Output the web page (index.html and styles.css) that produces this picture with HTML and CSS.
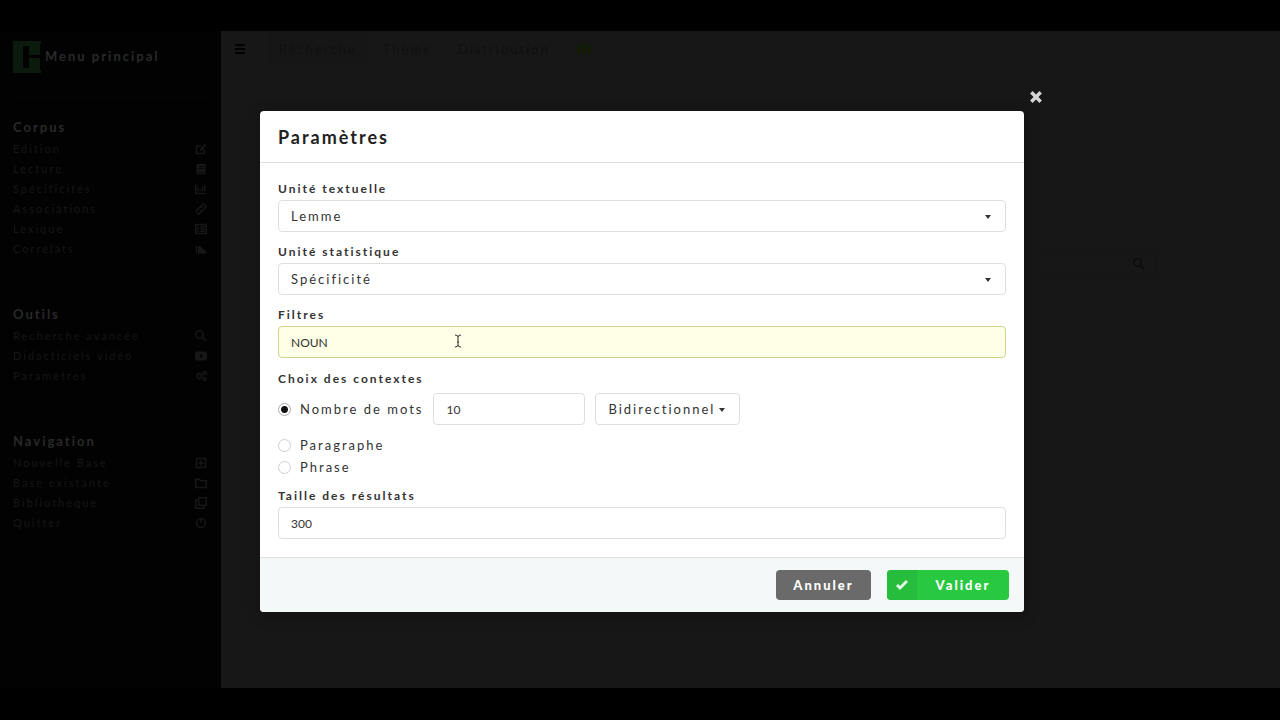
FILE: index.html
```html
<!DOCTYPE html>
<html lang="fr">
<head>
    <meta charset="UTF-8">
    <title>Paramètres</title>
    <link rel="stylesheet" href="styles.css">
</head>
<body>
    <div class="app">
        <nav class="sidebar">
            <div class="brand">
                <svg class="logo" viewBox="0 0 28 32">
                    <path fill="#0c190d" d="M0 0h28v3h-1v11H16V5h-6v22h6V17h11v12h1v3H0z"/>
                </svg>
                <span>Menu principal</span>
            </div>

            <div class="menu">
                <h2>Corpus</h2>
                <a href="#">Edition
                    <svg class="icon" viewBox="0 0 16 16"><path class="line" d="M12 9v5H2V4h6"/><path d="M6 11l1-3 6-7 2 2-6 7z"/></svg>
                </a>
                <a href="#">Lecture
                    <svg class="icon" viewBox="0 0 16 16"><path d="M4 1h10v14H4a2 2 0 0 1-2-2V3a2 2 0 0 1 2-2zm1 3v1h7V4zm0 3v1h7V7zm-1 5v1h8v-1z"/></svg>
                </a>
                <a href="#">Spécificités
                    <svg class="icon" viewBox="0 0 16 16"><path class="line" d="M1 2v12h14M4 11V7m3 4V9m3 2V5m3 6V3"/></svg>
                </a>
                <a href="#">Associations
                    <svg class="icon" viewBox="0 0 16 16"><path class="line" d="M7 5l3-3a3 3 0 0 1 4 4l-4 4a3 3 0 0 1-4 0M9 11l-3 3a3 3 0 0 1-4-4l4-4a3 3 0 0 1 4 0"/></svg>
                </a>
                <a href="#">Lexique
                    <svg class="icon" viewBox="0 0 16 16"><path class="line" d="M1 2h14v12H1zM3 5h2m2 0h6M3 8h2m2 0h6M3 11h2m2 0h6"/></svg>
                </a>
                <a href="#">Corrélats
                    <svg class="icon" viewBox="0 0 16 16"><path d="M1 3h2v11H1zm3 1h3l3 3v2l2-1 3 4v2H4z"/></svg>
                </a>
            </div>

            <div class="menu">
                <h2>Outils</h2>
                <a href="#">Recherche avancée
                    <svg class="icon" viewBox="0 0 16 16"><circle class="line" cx="6" cy="6" r="5"/><path class="line" d="M10 10l5 5"/></svg>
                </a>
                <a href="#">Didacticiels vidéo
                    <svg class="icon" viewBox="0 0 16 16"><path d="M2 2h12l2 2v8l-2 2H2l-2-2V4zm5 3v6l4-3z"/></svg>
                </a>
                <a href="#">Paramètres
                    <svg class="icon" viewBox="0 0 16 16"><circle class="line" cx="6" cy="8" r="3"/><path class="line" d="M6 3v2m0 6v2M1 8h2m6 0h2M3 5l1 1m4 4l1 1M9 5L8 6m-4 4l-1 1"/><circle class="line" cx="13" cy="4" r="2"/><circle class="line" cx="13" cy="12" r="2"/></svg>
                </a>
            </div>

            <div class="menu">
                <h2>Navigation</h2>
                <a href="#">Nouvelle Base
                    <svg class="icon" viewBox="0 0 16 16"><path class="line" d="M2 2h12v12H2zM8 4v8M4 8h8"/></svg>
                </a>
                <a href="#">Base existante
                    <svg class="icon" viewBox="0 0 16 16"><path class="line" d="M1 3h5l2 2h7v9H1z"/></svg>
                </a>
                <a href="#">Bibliothèque
                    <svg class="icon" viewBox="0 0 16 16"><path class="line" d="M5 1h10v10H5zM5 4H1v11h11v-4"/></svg>
                </a>
                <a href="#">Quitter
                    <svg class="icon" viewBox="0 0 16 16"><circle class="line" cx="8" cy="8" r="6"/><path class="line" d="M8 3v5"/></svg>
                </a>
            </div>
        </nav>

        <main class="page">
            <div class="tabs">
                <button class="toggle" aria-label="Menu">
                    <svg viewBox="0 0 12 12"><path d="M1 1h10v2H1zm0 4h10v2H1zm0 4h10v2H1z"/></svg>
                </button>
                <a class="tab active" href="#">Recherche</a>
                <a class="tab" href="#">Thème</a>
                <a class="tab" href="#">Distribution</a>
                <svg class="map" viewBox="0 0 14 12"><path d="M0 2l4-2v10l-4 2zM5 0l4 2v10l-4-2zM10 2l4-2v10l-4 2z"/></svg>
            </div>
            <div class="search">
                <svg viewBox="0 0 16 16"><circle cx="6" cy="6" r="5"/><path d="M10 10l5 5"/></svg>
            </div>
        </main>
    </div>

    <div class="overlay">
        <form class="modal">
            <button type="button" class="close" aria-label="Fermer">
                <svg viewBox="0 0 12 12"><path d="M2 2l8 8M10 2l-8 8"/></svg>
            </button>

            <h1>Paramètres</h1>

            <div class="content">
                <div class="field">
                    <label for="unit">Unité textuelle</label>
                    <div class="dropdown">
                        <select id="unit"><option>Lemme</option></select>
                    </div>
                </div>

                <div class="field">
                    <label for="stat">Unité statistique</label>
                    <div class="dropdown">
                        <select id="stat"><option>Spécificité</option></select>
                    </div>
                </div>

                <div class="field">
                    <label for="filters">Filtres</label>
                    <div class="filled">
                        <input id="filters" type="text" value="NOUN">
                        <svg class="cursor" viewBox="0 0 8 14"><path d="M1 1q3 0 3 2q0-2 3-2M4 3v8M1 13q3 0 3-2q0 2 3 2M3 8h2"/></svg>
                    </div>
                </div>

                <fieldset>
                    <legend>Choix des contextes</legend>
                    <div class="words">
                        <label class="radio"><input type="radio" name="context" checked>Nombre de mots</label>
                        <input class="count" type="text" value="10" aria-label="Nombre de mots">
                        <div class="dropdown small">
                            <select aria-label="Direction"><option>Bidirectionnel</option></select>
                        </div>
                    </div>
                    <label class="radio"><input type="radio" name="context">Paragraphe</label>
                    <label class="radio"><input type="radio" name="context">Phrase</label>
                </fieldset>

                <div class="field">
                    <label for="size">Taille des résultats</label>
                    <input id="size" type="text" value="300">
                </div>
            </div>

            <div class="actions">
                <button type="button" class="cancel">Annuler</button>
                <button type="button" class="submit">
                    <span class="check"><svg viewBox="0 0 12 12"><path d="M1 6l3 3 7-7"/></svg></span>
                    <span class="text">Valider</span>
                </button>
            </div>
        </form>
    </div>
</body>
</html>
```
FILE: styles.css
```css
* {
    box-sizing: border-box;
}

body {
    margin: 0;
    min-height: 100vh;
    padding: 31px 0 32px;
    display: flex;
    background: #000;
    color: #333;
    font-family: Lato, sans-serif;
    font-size: 13px;
    line-height: 16px;
    letter-spacing: 2px;
}

a {
    text-decoration: none;
}

button, input, select {
    font: inherit;
    letter-spacing: inherit;
    color: inherit;
}

button {
    border: 0;
    padding: 0;
    background: none;
    cursor: pointer;
}

.app {
    flex: 1;
    display: flex;
}

/* sidebar */
.sidebar {
    width: 221px;
    padding: 0 14px 0 13px;
    background: #020202;
}

.brand {
    display: flex;
    gap: 4px;
    height: 67px;
    padding-top: 10px;
    margin-bottom: 20px;
    border-bottom: 1px solid #050505;
    font-weight: bold;
    line-height: 30px;
    color: #2a2a2a;
}

.logo {
    width: 28px;
    height: 32px;
}

.menu {
    margin-bottom: 46px;
}

.menu h2 {
    margin: 0 0 3px;
    font-size: 13px;
    line-height: 18px;
    color: #292929;
}

.menu a {
    display: flex;
    align-items: center;
    justify-content: space-between;
    height: 20px;
    font-size: 11px;
    color: #161616;
}

.icon {
    width: 12px;
    height: 12px;
    fill: #171717;
}

.icon .line {
    fill: none;
    stroke: #171717;
    stroke-width: 2;
}

/* page behind the modal */
.page {
    flex: 1;
    background: #171717;
}

.tabs {
    display: flex;
    align-items: center;
    height: 36px;
    padding-left: 13px;
}

.toggle {
    width: 12px;
    height: 12px;
    margin-right: 22px;
}

.toggle svg {
    display: block;
    fill: #020202;
}

.tab {
    padding: 8px 11px;
    margin-right: 4px;
    color: #101010;
}

.tab.active {
    border-radius: 4px;
    background: #161616;
}

.map {
    width: 14px;
    height: 12px;
    margin-left: 12px;
    fill: #131a05;
}

.search {
    display: flex;
    align-items: center;
    justify-content: flex-end;
    height: 30px;
    margin: 182px 124px 0 119px;
    padding-right: 10px;
    border: 1px solid #151515;
    border-radius: 4px;
}

.search svg {
    width: 12px;
    height: 12px;
    fill: none;
    stroke: #0d0d0d;
    stroke-width: 2;
}

/* modal */
.overlay {
    position: absolute;
    inset: 0;
    display: flex;
    align-items: center;
    justify-content: center;
    padding: 3px 0 0 4px;
}

.modal {
    position: relative;
    width: 60%;
    max-width: 764px;
    border-radius: 4px;
    background: #fff;
    box-shadow: 1px 3px 14px 2px rgba(0, 0, 0, 0.2);
}

.close {
    position: absolute;
    top: -21px;
    right: -19px;
    width: 14px;
    height: 14px;
}

.close svg {
    display: block;
    fill: none;
    stroke: #d4d4d4;
    stroke-width: 3;
}

h1 {
    margin: 0;
    padding: 14px 18px 13px;
    border-bottom: 1px solid #dedede;
    font-size: 18px;
    line-height: 24px;
    color: #222;
}

.content {
    padding: 18px;
}

.field {
    margin-bottom: 12px;
}

.field:last-child {
    margin-bottom: 0;
}

.field > label, legend {
    display: block;
    margin-bottom: 3px;
    padding: 0;
    font-size: 12px;
    font-weight: bold;
}

input[type="text"], select {
    display: block;
    width: 100%;
    height: 32px;
    padding: 0 12px;
    border: 1px solid #dedede;
    border-radius: 4px;
    background: #fff;
}

input[type="text"] {
    font-size: 12px;
    letter-spacing: normal;
}

select {
    appearance: none;
}

.dropdown {
    position: relative;
}

.dropdown::after {
    content: "";
    position: absolute;
    top: 15px;
    right: 15px;
    border: 3px solid transparent;
    border-top: 4px solid #333;
    border-bottom: 0;
    pointer-events: none;
}

.dropdown.small select {
    width: 145px;
}

.filled {
    position: relative;
}

.filled input[type="text"] {
    border-color: #cfd48e;
    background: #feffe6;
}

.cursor {
    position: absolute;
    top: 8px;
    left: 176px;
    width: 8px;
    height: 14px;
    fill: none;
    stroke: #333;
}

fieldset {
    margin: 13px 0 10px;
    padding: 0;
    border: 0;
}

legend {
    margin-bottom: 6px;
}

.words {
    display: flex;
    align-items: center;
    gap: 10px;
    margin-bottom: 9px;
}

.words .count {
    width: 152px;
}

.radio {
    display: flex;
    align-items: center;
    gap: 9px;
    height: 22px;
}

.radio input {
    appearance: none;
    width: 13px;
    height: 13px;
    margin: 0;
    border: 1px solid #cfcfcf;
    border-radius: 50%;
}

.radio input:checked {
    border-color: #aaa;
    background: radial-gradient(circle, #111 3px, #fff 4px);
}

.actions {
    display: flex;
    justify-content: flex-end;
    gap: 16px;
    padding: 12px 15px;
    border-top: 1px solid #dedede;
    border-radius: 0 0 4px 4px;
    background: #f4f8f9;
}

.actions button {
    height: 30px;
    border-radius: 4px;
    color: #fff;
    font-weight: 900;
}

.cancel {
    width: 95px;
    background: #6a6a6a;
}

.submit {
    display: flex;
    width: 122px;
    overflow: hidden;
    background: #28c840;
}

.check {
    display: flex;
    align-items: center;
    justify-content: center;
    width: 30px;
    height: 30px;
    background: #26bd3c;
}

.check svg {
    width: 12px;
    height: 12px;
    fill: none;
    stroke: #e6f8e8;
    stroke-width: 3;
}

.submit .text {
    flex: 1;
    line-height: 30px;
}
```
